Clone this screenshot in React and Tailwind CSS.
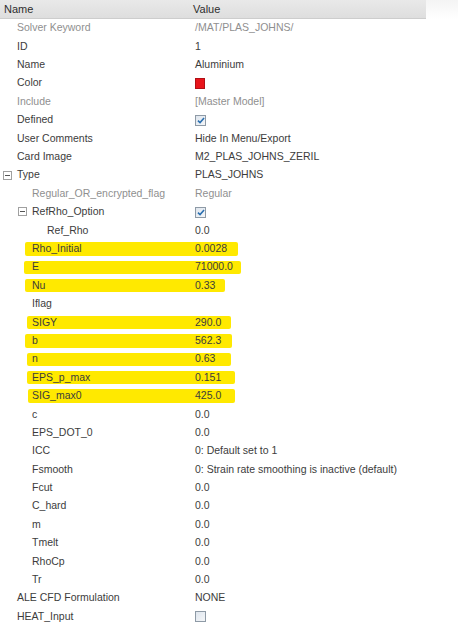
import React from 'react';

// Material card property grid (name / value tree)
const rows = [
  { name: 'Solver Keyword', value: '/MAT/PLAS_JOHNS/', lvl: 0, muted: true },
  { name: 'ID', value: '1', lvl: 0 },
  { name: 'Name', value: 'Aluminium', lvl: 0 },
  { name: 'Color', kind: 'color', lvl: 0 },
  { name: 'Include', value: '[Master Model]', lvl: 0, muted: true },
  { name: 'Defined', kind: 'check', checked: true, lvl: 0 },
  { name: 'User Comments', value: 'Hide In Menu/Export', lvl: 0 },
  { name: 'Card Image', value: 'M2_PLAS_JOHNS_ZERIL', lvl: 0 },
  { name: 'Type', value: 'PLAS_JOHNS', lvl: 0, group: true },
  { name: 'Regular_OR_encrypted_flag', value: 'Regular', lvl: 1, muted: true },
  { name: 'RefRho_Option', kind: 'check', checked: true, lvl: 1, group: true },
  { name: 'Ref_Rho', value: '0.0', lvl: 2 },
  { name: 'Rho_Initial', value: '0.0028', lvl: 1, mark: [25, 213] },
  { name: 'E', value: '71000.0', lvl: 1, mark: [24, 217] },
  { name: 'Nu', value: '0.33', lvl: 1, mark: [25, 200] },
  { name: 'Iflag', value: '', lvl: 1 },
  { name: 'SIGY', value: '290.0', lvl: 1, mark: [27, 204] },
  { name: 'b', value: '562.3', lvl: 1, mark: [25, 207] },
  { name: 'n', value: '0.63', lvl: 1, mark: [27, 204] },
  { name: 'EPS_p_max', value: '0.151', lvl: 1, mark: [27, 208] },
  { name: 'SIG_max0', value: '425.0', lvl: 1, mark: [28, 207] },
  { name: 'c', value: '0.0', lvl: 1 },
  { name: 'EPS_DOT_0', value: '0.0', lvl: 1 },
  { name: 'ICC', value: '0: Default set to 1', lvl: 1 },
  { name: 'Fsmooth', value: '0: Strain rate smoothing is inactive (default)', lvl: 1 },
  { name: 'Fcut', value: '0.0', lvl: 1 },
  { name: 'C_hard', value: '0.0', lvl: 1 },
  { name: 'm', value: '0.0', lvl: 1 },
  { name: 'Tmelt', value: '0.0', lvl: 1 },
  { name: 'RhoCp', value: '0.0', lvl: 1 },
  { name: 'Tr', value: '0.0', lvl: 1 },
  { name: 'ALE CFD Formulation', value: 'NONE', lvl: 0 },
  { name: 'HEAT_Input', kind: 'check', checked: false, lvl: 0 },
];

const indent = ['pl-[17px]', 'pl-[32px]', 'pl-[47px]'];

function Check({ checked }) {
  return (
    <span className="w-[11px] h-[11px] border border-[#8e9aa6] bg-gradient-to-br from-[#dfe6ee] to-[#f4f6f8] flex items-center justify-center">
      {checked && (
        <svg width="8" height="7" viewBox="0 0 9 8">
          <path d="M1 4.2 L3.4 6.4 L8 1.2" fill="none" stroke="#2a6fb0" strokeWidth="1.8" />
        </svg>
      )}
    </span>
  );
}

export default function App() {
  return (
    <div className="w-[458px] h-[630px] overflow-hidden bg-white text-[10.5px] text-[#3c3c3c]" style={{ fontFamily: '"Liberation Sans", Arial, sans-serif' }}>
      <div className="flex bg-gradient-to-b from-[#f4f4f4] to-white">
        <div className="w-[426px] h-[19px] flex items-center bg-gradient-to-b from-[#e9e9e9] to-[#dedede] border-b border-[#cdcdcd] text-[11px] text-[#2e2e2e]">
          <span className="w-[193px] pl-[4px]">Name</span>
          <span>Value</span>
        </div>
      </div>

      <div className="flex flex-col">
        {rows.map((r, i) => (
          <div key={i} className="relative h-[18.4px] flex items-center">
            {r.mark && (
              <span className="absolute top-[2.5px] h-[13.5px] bg-[#ffe900] rounded-[2px]"
                style={{ left: r.mark[0], width: r.mark[1] }} />
            )}
            <div className={`relative w-[195px] h-full flex items-center ${indent[r.lvl]} ${r.muted ? 'text-[#8f8f8f]' : ''}`}>
              {r.group && (
                <span className={`absolute top-[4.5px] w-[9px] h-[9px] border border-[#a0a0a0] bg-white flex items-center justify-center ${r.lvl === 0 ? 'left-[3px]' : 'left-[18px]'}`}>
                  <span className="w-[5px] h-px bg-[#555]" />
                </span>
              )}
              <span className="whitespace-nowrap">{r.name}</span>
            </div>
            <div className={`relative flex items-center whitespace-nowrap ${r.muted ? 'text-[#8f8f8f]' : ''}`}>
              {r.kind === 'color' && <span className="w-[10px] h-[11px] bg-[#e8141b] border border-[#b01015]" />}
              {r.kind === 'check' && <Check checked={r.checked} />}
              {!r.kind && r.value}
            </div>
          </div>
        ))}
      </div>

      <div className="pt-[2px] pl-[150px] text-[15px] text-black whitespace-nowrap" style={{ fontFamily: '"Liberation Serif", serif' }}>
        Material data for aluminium alloy
      </div>
    </div>
  );
}
